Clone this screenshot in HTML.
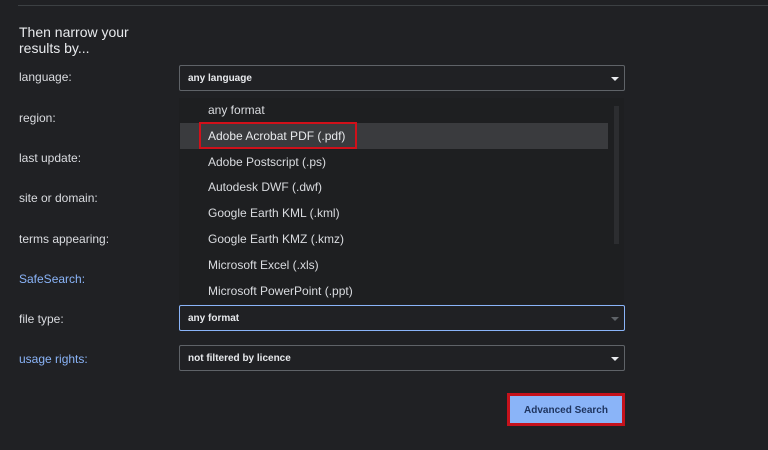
<!DOCTYPE html>
<html><head><style>
body{margin:0;width:768px;height:450px;background:#202124;font-family:"Liberation Sans",Arial,sans-serif;position:relative;overflow:hidden;color:#e8eaed}
.a{position:absolute}
.lbl{position:absolute;left:19px;font-size:12px;color:#dadce0}
.blue{color:#8ab4f8}
.sel{position:absolute;left:179px;width:446px;height:26px;border:1px solid #5f6368;border-radius:2px;box-sizing:border-box;font-size:10px;font-weight:bold;color:#e8eaed;padding-left:8px;line-height:26px}
.arr{position:absolute;right:5px;top:11px;width:0;height:0;border-left:4px solid transparent;border-right:4px solid transparent;border-top:4px solid #e8eaed}
.opt{position:absolute;left:208px;font-size:12px;color:#dadce0}
</style></head><body>
<div class="a" style="left:18px;top:5px;width:750px;height:1px;background:#3c4043"></div>
<div class="a" style="left:19px;top:24px;font-size:14px;line-height:16px;color:#e8eaed">Then narrow your<br>results by...</div>
<div class="lbl" style="top:70px">language:</div>
<div class="lbl" style="top:111px">region:</div>
<div class="lbl" style="top:151px">last update:</div>
<div class="lbl" style="top:191px">site or domain:</div>
<div class="lbl" style="top:232px">terms appearing:</div>
<div class="lbl blue" style="top:272px">SafeSearch:</div>
<div class="lbl" style="top:312px">file type:</div>
<div class="lbl blue" style="top:352px">usage rights:</div>

<div class="sel" style="top:65px">any language<div class="arr"></div></div>

<div class="a" style="left:179px;top:98px;width:445px;height:206px;background:#1e1f21"></div>
<div class="a" style="left:180px;top:123px;width:428px;height:26px;background:#3a3b3e"></div>
<div class="a" style="left:614px;top:106px;width:5px;height:138px;background:#2c2d30"></div>
<div class="a" style="left:199px;top:122px;width:158px;height:27px;border:2px solid #d0101a;box-sizing:border-box"></div>
<div class="opt" style="top:103px">any format</div>
<div class="opt" style="top:129px;color:#e8eaed">Adobe Acrobat PDF (.pdf)</div>
<div class="opt" style="top:155px">Adobe Postscript (.ps)</div>
<div class="opt" style="top:180px">Autodesk DWF (.dwf)</div>
<div class="opt" style="top:206px">Google Earth KML (.kml)</div>
<div class="opt" style="top:232px">Google Earth KMZ (.kmz)</div>
<div class="opt" style="top:258px">Microsoft Excel (.xls)</div>
<div class="opt" style="top:284px">Microsoft PowerPoint (.ppt)</div>

<div class="sel" style="top:305px;border-color:#8ab4f8">any format<div class="arr" style="border-top-color:#5f6368"></div></div>
<div class="sel" style="top:345px">not filtered by licence<div class="arr"></div></div>

<div class="a" style="left:507px;top:393px;width:118px;height:33px;border:3px solid #c5121c;box-sizing:border-box;background:#8ab4f8;color:#1f3560;font-size:10px;font-weight:bold;text-align:center;line-height:29px">Advanced Search</div>
</body></html>
